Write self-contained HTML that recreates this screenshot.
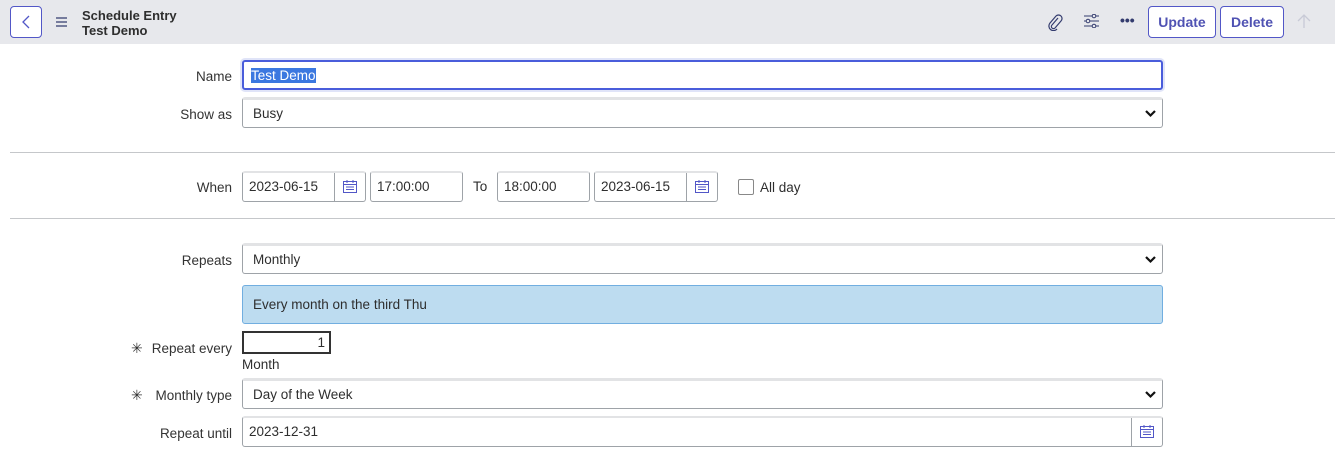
<!DOCTYPE html>
<html><head><style>
*{box-sizing:border-box;margin:0;padding:0}
body{width:1335px;height:464px;background:#fff;font-family:"Liberation Sans",sans-serif;font-size:13px;color:#2e2e2e;position:relative;overflow:hidden}
.hdr{position:absolute;left:0;top:0;width:1335px;height:44px;background:#e7e8ec}
.abs{position:absolute}
.back{left:10px;top:6px;width:32px;height:32px;border:1px solid #5257c7;border-radius:4px;background:#fff}
.title{left:82px;top:8px;font-weight:bold;font-size:13px;line-height:15px;color:#2e2e2e}
.btn{top:6px;height:32px;border:1px solid #5257c7;border-radius:4px;background:#fff;color:#4f52b3;font-weight:bold;font-size:14px;line-height:30px;text-align:center}
.lbl{text-align:right;width:232px;left:0;font-size:13.5px;color:#333}
.inp{border:1px solid #9ea3a8;border-radius:3px;background:#fff;font-size:13.5px;padding-left:10px;line-height:28px;height:31px}
.sel{border-top:3px solid #e2e3e5}
.chev{position:absolute;right:6px;top:10px}
.hr{left:10px;width:1325px;height:1px;background:#c5c7ca}
.cal{position:absolute;right:0;top:0;width:31px;height:29px;border-left:1px solid #9ea3a8}
.ast{position:absolute;left:131px;font-size:14px;color:#333}
</style></head><body>
<div class="hdr"></div>
<div class="abs back"><svg width="30" height="30"><path d="M18 9 L12 15 L18 21" stroke="#5257c7" stroke-width="1.3" fill="none"/></svg></div>
<svg class="abs" style="left:56px;top:17px" width="12" height="10"><path d="M0 1h11M0 5h11M0 9h11" stroke="#333b6e" stroke-width="1.3"/></svg>
<div class="abs title">Schedule Entry<br>Test Demo</div>
<svg class="abs" style="left:1047px;top:13px" width="16" height="18"><path d="M11 5 L5 12 a2 2 0 0 0 3 3 L14 8 a3.5 3.5 0 0 0 -5 -5 L3 10 a4.5 4.5 0 0 0 7 6" stroke="#333b6e" stroke-width="1.2" fill="none"/></svg>
<svg class="abs" style="left:1084px;top:14px" width="16" height="14"><path d="M0 2h15M0 7h15M0 12h15" stroke="#333b6e" stroke-width="1.1"/><circle cx="10" cy="2" r="1.8" fill="#e7e8ec" stroke="#333b6e"/><circle cx="4" cy="7" r="1.8" fill="#e7e8ec" stroke="#333b6e"/><circle cx="10" cy="12" r="1.8" fill="#e7e8ec" stroke="#333b6e"/></svg>
<div class="abs" style="left:1120px;top:12px;font-weight:bold;color:#333b6e;font-size:14px">•••</div>
<div class="abs btn" style="left:1148px;width:68px">Update</div>
<div class="abs btn" style="left:1220px;width:64px">Delete</div>
<svg class="abs" style="left:1297px;top:13px" width="14" height="16"><path d="M7 15V2M1 8l6-6 6 6" stroke="#c8cad6" stroke-width="1.3" fill="none"/></svg>

<div class="abs lbl" style="top:69px">Name</div>
<div class="abs" style="left:240px;top:58px;width:925px;height:34px;border:2px solid #e0e4f8;border-radius:5px"></div>
<div class="abs inp" style="left:242px;top:60px;width:921px;height:30px;border:2px solid #4a5ddb;line-height:28px;padding-left:7px"><span style="background:#3b78e0;color:#fff">Test Demo</span></div>
<div class="abs lbl" style="top:107px">Show as</div>
<div class="abs inp sel" style="left:242px;top:97px;width:921px;line-height:28px">Busy<svg class="chev" width="11" height="8"><path d="M1 1l4.5 4.5L10 1" stroke="#111" stroke-width="2.2" fill="none"/></svg></div>
<div class="abs hr" style="top:152px"></div>

<div class="abs lbl" style="top:180px">When</div>
<div class="abs inp sel" style="left:242px;top:171px;width:124px;line-height:28px;padding-left:6px;border-top-width:2px">2023-06-15<div class="cal"><svg style="margin:7px 8px" width="14" height="13"><rect x="0.5" y="1.5" width="13" height="11" fill="none" stroke="#5257c7"/><path d="M0 4.5h14M4 0v3M10 0v3M3 7h8M3 9.5h8" stroke="#5257c7"/></svg></div></div>
<div class="abs inp sel" style="left:370px;top:171px;width:93px;line-height:28px;padding-left:6px;border-top-width:2px">17:00:00</div>
<div class="abs" style="left:473px;top:179px;font-size:13.5px">To</div>
<div class="abs inp sel" style="left:497px;top:171px;width:93px;line-height:28px;padding-left:6px;border-top-width:2px">18:00:00</div>
<div class="abs inp sel" style="left:594px;top:171px;width:124px;line-height:28px;padding-left:6px;border-top-width:2px">2023-06-15<div class="cal"><svg style="margin:7px 8px" width="14" height="13"><rect x="0.5" y="1.5" width="13" height="11" fill="none" stroke="#5257c7"/><path d="M0 4.5h14M4 0v3M10 0v3M3 7h8M3 9.5h8" stroke="#5257c7"/></svg></div></div>
<div class="abs" style="left:738px;top:179px;width:16px;height:16px;border:1px solid #888;border-radius:2px"></div>
<div class="abs" style="left:760px;top:180px;font-size:13.5px">All day</div>
<div class="abs hr" style="top:218px"></div>

<div class="abs lbl" style="top:253px">Repeats</div>
<div class="abs inp sel" style="left:242px;top:243px;width:921px;line-height:28px">Monthly<svg class="chev" width="11" height="8"><path d="M1 1l4.5 4.5L10 1" stroke="#111" stroke-width="2.2" fill="none"/></svg></div>
<div class="abs" style="left:242px;top:285px;width:921px;height:39px;background:#bddcf0;border:1px solid #71aee0;border-radius:3px;padding-left:10px;line-height:38px;font-size:13.5px">Every month on the third Thu</div>
<div class="ast" style="top:340px">✳</div>
<div class="abs lbl" style="top:341px">Repeat every</div>
<div class="abs" style="left:242px;top:331px;width:89px;height:23px;border:2px solid #333;text-align:right;padding-right:4px;line-height:20px;font-size:13.5px">1</div>
<div class="abs" style="left:242px;top:357px;font-size:13.5px">Month</div>
<div class="ast" style="top:387px">✳</div>
<div class="abs lbl" style="top:388px">Monthly type</div>
<div class="abs inp sel" style="left:242px;top:378px;width:921px;line-height:28px">Day of the Week<svg class="chev" width="11" height="8"><path d="M1 1l4.5 4.5L10 1" stroke="#111" stroke-width="2.2" fill="none"/></svg></div>
<div class="abs lbl" style="top:426px">Repeat until</div>
<div class="abs inp sel" style="left:242px;top:416px;width:921px;line-height:28px;border-top-width:2px;padding-left:6px">2023-12-31<div class="cal"><svg style="margin:7px 8px" width="14" height="13"><rect x="0.5" y="1.5" width="13" height="11" fill="none" stroke="#5257c7"/><path d="M0 4.5h14M4 0v3M10 0v3M3 7h8M3 9.5h8" stroke="#5257c7"/></svg></div></div>
</body></html>
